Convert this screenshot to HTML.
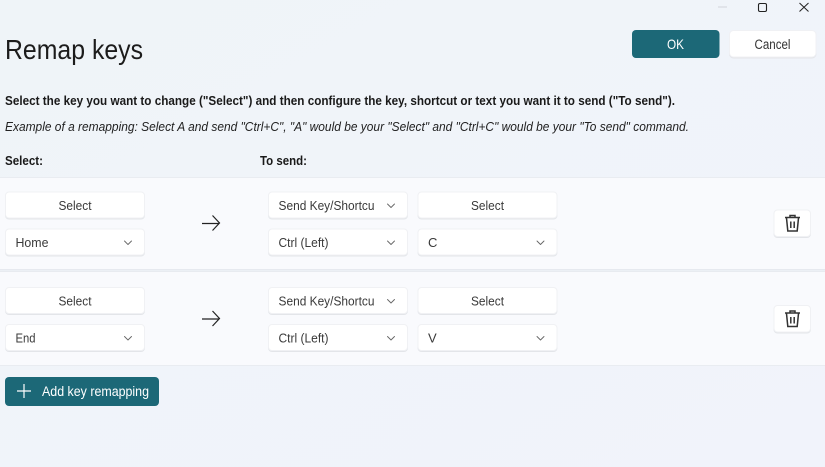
<!DOCTYPE html>
<html><head><meta charset="utf-8"><style>
html,body{margin:0;padding:0;width:825px;height:467px;overflow:hidden;background:#f0f4f9}
svg{display:block}
text{font-family:"Liberation Sans",sans-serif;fill:#1c1c1c;font-size:13px}
.l{fill:#3a3a3a}
.b{fill:#fff;stroke:#f0f1f4;stroke-width:1;filter:drop-shadow(0 1px 0 #e3e5e9)}
.s{fill:#1a1a1a;font-weight:700;font-size:13px}
.c{fill:none;stroke:#666;stroke-width:.9;stroke-linecap:round;stroke-linejoin:round}
</style></head><body>
<svg width="825" height="467" viewBox="0 0 825 467" xmlns="http://www.w3.org/2000/svg">
<defs>
<linearGradient id="bg" x1="0" y1="0" x2="1" y2="1"><stop offset="0" stop-color="#eff4f8"/><stop offset="1" stop-color="#f1f3fb"/></linearGradient>
</defs>
<rect width="825" height="467" fill="url(#bg)"/>
<!-- window controls -->
<path d="M718 7h9" stroke="#d2d5da" stroke-width="1"/>
<rect x="758.500" y="3.500" width="8" height="8" rx="1.500" fill="none" stroke="#222" stroke-width="1.100"/>
<path d="M799.500 3L808.500 11.500M808.500 3L799.500 11.500" stroke="#222" stroke-width="1" fill="none"/>
<!-- header -->
<text x="5" y="59" style="font-size:28px" fill="#1c1c1c" textLength="138" lengthAdjust="spacingAndGlyphs">Remap keys</text>
<rect x="632" y="30" width="87.500" height="28" rx="4" fill="#1c6877"/>
<text x="667" y="49" style="fill:#fff;font-size:14px" textLength="17" lengthAdjust="spacingAndGlyphs">OK</text>
<rect x="729.500" y="30.500" width="86.500" height="26.500" rx="4" class="b"/>
<text x="754.500" y="49" style="font-size:13.500px;fill:#333" textLength="36" lengthAdjust="spacingAndGlyphs">Cancel</text>
<!-- description -->
<text x="5" y="105" class="s" textLength="670" lengthAdjust="spacingAndGlyphs">Select the key you want to change ("Select") and then configure the key, shortcut or text you want it to send ("To send").</text>
<text x="5" y="131" style="font-size:13px;font-style:italic;fill:#222" textLength="684" lengthAdjust="spacingAndGlyphs">Example of a remapping: Select A and send "Ctrl+C", "A" would be your "Select" and "Ctrl+C" would be your "To send" command.</text>
<text x="5" y="165" class="s" textLength="38" lengthAdjust="spacingAndGlyphs">Select:</text>
<text x="260" y="165" class="s" textLength="47" lengthAdjust="spacingAndGlyphs">To send:</text>
<!-- row backgrounds -->
<rect x="0" y="177" width="825" height="92" fill="#f9fafd"/>
<path d="M0 177.500H825" stroke="#e9ecf1"/>
<rect x="0" y="269" width="825" height="3" fill="#ecf0f5"/>
<path d="M0 269.500H825" stroke="#e6e9ef"/>
<path d="M0 271.500H825" stroke="#e8ebf0"/>
<rect x="0" y="272" width="825" height="93" fill="#f9fafd"/>
<path d="M0 365.500H825" stroke="#e9ecf1"/>

<!-- Row 1 -->
<rect x="5.500" y="192" width="139" height="26" rx="3.500" class="b"/>
<text x="58.500" y="210" class="l" textLength="33" lengthAdjust="spacingAndGlyphs">Select</text>
<rect x="5.500" y="229" width="139" height="26" rx="3.500" class="b"/>
<text x="15.500" y="247" class="l" textLength="33" lengthAdjust="spacingAndGlyphs">Home</text>
<path class="c" d="M124.500 241l3.500 3.500 3.500-3.500"/>
<path d="M202 223.500H219M212.500 215.500L219.500 223L212.500 230.500" fill="none" stroke="#222" stroke-width="1.200"/>
<rect x="268.500" y="192" width="139" height="26" rx="3.500" class="b"/>
<text x="278.500" y="210" class="l" textLength="96" lengthAdjust="spacingAndGlyphs">Send Key/Shortcu</text>
<path class="c" d="M387.500 204l3.500 3.500 3.500-3.500"/>
<rect x="268.500" y="229" width="139" height="26" rx="3.500" class="b"/>
<text x="278.500" y="247" class="l" textLength="50" lengthAdjust="spacingAndGlyphs">Ctrl (Left)</text>
<path class="c" d="M387.500 241l3.500 3.500 3.500-3.500"/>
<rect x="418" y="192" width="139" height="26" rx="3.500" class="b"/>
<text x="471" y="210" class="l" textLength="33" lengthAdjust="spacingAndGlyphs">Select</text>
<rect x="418" y="229" width="139" height="26" rx="3.500" class="b"/>
<text x="428" y="247" class="l">C</text>
<path class="c" d="M537 241l3.500 3.500 3.500-3.500"/>
<rect x="774" y="210" width="36.500" height="26.500" rx="3.500" class="b"/>
<g fill="none" stroke="#333" stroke-width="1.500">
<path d="M785 217.500h15M790 217v-1.500h5v1.500M786.500 218l1.300 13h9.400l1.300-13M790.800 221.500v6.500M794.200 221.500v6.500"/>
</g>

<!-- Row 2 -->
<rect x="5.500" y="287.500" width="139" height="26" rx="3.500" class="b"/>
<text x="58.500" y="305.500" class="l" textLength="33" lengthAdjust="spacingAndGlyphs">Select</text>
<rect x="5.500" y="324.500" width="139" height="26" rx="3.500" class="b"/>
<text x="15.500" y="342.500" class="l" textLength="20" lengthAdjust="spacingAndGlyphs">End</text>
<path class="c" d="M124.500 336.500l3.500 3.500 3.500-3.500"/>
<path d="M202 319H219M212.500 311L219.500 318.500L212.500 326" fill="none" stroke="#222" stroke-width="1.200"/>
<rect x="268.500" y="287.500" width="139" height="26" rx="3.500" class="b"/>
<text x="278.500" y="305.500" class="l" textLength="96" lengthAdjust="spacingAndGlyphs">Send Key/Shortcu</text>
<path class="c" d="M387.500 299.500l3.500 3.500 3.500-3.500"/>
<rect x="268.500" y="324.500" width="139" height="26" rx="3.500" class="b"/>
<text x="278.500" y="342.500" class="l" textLength="50" lengthAdjust="spacingAndGlyphs">Ctrl (Left)</text>
<path class="c" d="M387.500 336.500l3.500 3.500 3.500-3.500"/>
<rect x="418" y="287.500" width="139" height="26" rx="3.500" class="b"/>
<text x="471" y="305.500" class="l" textLength="33" lengthAdjust="spacingAndGlyphs">Select</text>
<rect x="418" y="324.500" width="139" height="26" rx="3.500" class="b"/>
<text x="428" y="342.500" class="l">V</text>
<path class="c" d="M537 336.500l3.500 3.500 3.500-3.500"/>
<rect x="774" y="305.500" width="36.500" height="26.500" rx="3.500" class="b"/>
<g fill="none" stroke="#333" stroke-width="1.500">
<path d="M785 313h15M790 312.500v-1.500h5v1.500M786.500 313.500l1.300 13h9.400l1.300-13M790.800 317v6.500M794.200 317v6.500"/>
</g>

<!-- Add button -->
<rect x="5" y="377" width="154" height="29" rx="4" fill="#1c6877"/>
<path d="M24 384v14M17 391h14" stroke="#fff" stroke-width="1.200" fill="none"/>
<text x="42" y="396" style="fill:#fff;font-size:13.500px" textLength="107" lengthAdjust="spacingAndGlyphs">Add key remapping</text>
</svg>
</body></html>
